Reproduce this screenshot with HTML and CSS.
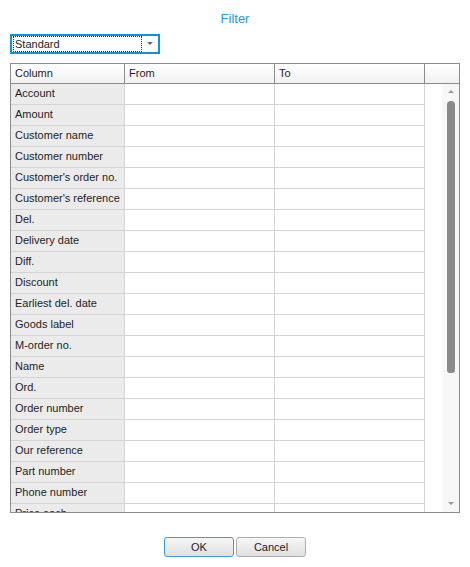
FILE: index.html
```html
<!DOCTYPE html>
<html lang="en">
<head>
    <meta charset="UTF-8">
    <title>Filter</title>
    <link rel="stylesheet" href="styles.css">
</head>
<body>

<div class="dialog">
    <h1 class="title">Filter</h1>

    <div class="select">
        <span class="select-text">Standard</span>
        <span class="select-arrow"></span>
    </div>

    <div class="grid">
        <div class="grid-head">
            <div class="hcell c-col">Column</div>
            <div class="hcell c-from">From</div>
            <div class="hcell c-to">To</div>
            <div class="hcell c-end"></div>
        </div>
        <div class="grid-body">
            <div class="rows">
                <div class="row"><div class="cell c-col name">Account</div><div class="cell c-from"></div><div class="cell c-to"></div></div>
                <div class="row"><div class="cell c-col name">Amount</div><div class="cell c-from"></div><div class="cell c-to"></div></div>
                <div class="row"><div class="cell c-col name">Customer name</div><div class="cell c-from"></div><div class="cell c-to"></div></div>
                <div class="row"><div class="cell c-col name">Customer number</div><div class="cell c-from"></div><div class="cell c-to"></div></div>
                <div class="row"><div class="cell c-col name">Customer's order no.</div><div class="cell c-from"></div><div class="cell c-to"></div></div>
                <div class="row"><div class="cell c-col name">Customer's reference</div><div class="cell c-from"></div><div class="cell c-to"></div></div>
                <div class="row"><div class="cell c-col name">Del.</div><div class="cell c-from"></div><div class="cell c-to"></div></div>
                <div class="row"><div class="cell c-col name">Delivery date</div><div class="cell c-from"></div><div class="cell c-to"></div></div>
                <div class="row"><div class="cell c-col name">Diff.</div><div class="cell c-from"></div><div class="cell c-to"></div></div>
                <div class="row"><div class="cell c-col name">Discount</div><div class="cell c-from"></div><div class="cell c-to"></div></div>
                <div class="row"><div class="cell c-col name">Earliest del. date</div><div class="cell c-from"></div><div class="cell c-to"></div></div>
                <div class="row"><div class="cell c-col name">Goods label</div><div class="cell c-from"></div><div class="cell c-to"></div></div>
                <div class="row"><div class="cell c-col name">M-order no.</div><div class="cell c-from"></div><div class="cell c-to"></div></div>
                <div class="row"><div class="cell c-col name">Name</div><div class="cell c-from"></div><div class="cell c-to"></div></div>
                <div class="row"><div class="cell c-col name">Ord.</div><div class="cell c-from"></div><div class="cell c-to"></div></div>
                <div class="row"><div class="cell c-col name">Order number</div><div class="cell c-from"></div><div class="cell c-to"></div></div>
                <div class="row"><div class="cell c-col name">Order type</div><div class="cell c-from"></div><div class="cell c-to"></div></div>
                <div class="row"><div class="cell c-col name">Our reference</div><div class="cell c-from"></div><div class="cell c-to"></div></div>
                <div class="row"><div class="cell c-col name">Part number</div><div class="cell c-from"></div><div class="cell c-to"></div></div>
                <div class="row"><div class="cell c-col name">Phone number</div><div class="cell c-from"></div><div class="cell c-to"></div></div>
                <div class="row"><div class="cell c-col name">Price each</div><div class="cell c-from"></div><div class="cell c-to"></div></div>
            </div>
            <div class="scroll-area">
                <div class="scrollbar">
                    <span class="arrow-up"></span>
                    <div class="thumb"></div>
                    <span class="arrow-down"></span>
                </div>
            </div>
        </div>
    </div>

    <div class="buttons">
        <button class="btn btn-default">OK</button>
        <button class="btn">Cancel</button>
    </div>
</div>

</body>
</html>
```

FILE: styles.css
```css
body {
    margin: 0;
    background-color: #fff;
    font-family: "Liberation Sans", Arial, sans-serif;
    font-size: 11px;
    color: #1e1e1e;
}
.dialog {
    padding: 10px 10px 0 10px;
}
.title {
    margin: 0;
    height: 18px;
    line-height: 18px;
    text-align: center;
    font-size: 13px;
    font-weight: normal;
    color: #1e96ea;
}
.select {
    margin-top: 6px;
    width: 146px;
    height: 16px;
    border: 2px solid #0b92e2;
    display: flex;
    align-items: center;
    position: relative;
}
.select-text {
    flex: 1;
    height: 14px;
    line-height: 14px;
    padding-left: 1px;
    border: 1px dotted #333;
    margin-left: 1px;
}
.select-arrow {
    width: 16px;
    height: 16px;
    position: relative;
}
.select-arrow::after {
    content: "";
    position: absolute;
    left: 5px;
    top: 6px;
    border-left: 3px solid transparent;
    border-right: 3px solid transparent;
    border-top: 3px solid #666;
}
.grid {
    margin-top: 9px;
    width: 448px;
    border: 1px solid #8c8c8c;
}
.grid-head {
    display: flex;
    height: 19px;
    border-bottom: 1px solid #8c8c8c;
    background: linear-gradient(#ffffff, #f1f1f1);
}
.hcell {
    line-height: 19px;
    padding-left: 4px;
    box-sizing: border-box;
    border-right: 1px solid #8c8c8c;
}
.hcell.c-end {
    border-right: none;
    flex: 1;
}
.c-col {
    width: 114px;
}
.c-from {
    width: 150px;
}
.c-to {
    width: 150px;
}
.grid-body {
    display: flex;
    height: 428px;
    overflow: hidden;
}
.rows {
    width: 414px;
    flex-shrink: 0;
}
.row {
    display: flex;
    height: 20px;
    border-bottom: 1px solid #d4d4d4;
}
.cell {
    box-sizing: border-box;
    border-right: 1px solid #d4d4d4;
    line-height: 18px;
    padding-left: 4px;
    white-space: nowrap;
    overflow: hidden;
}
.cell.name {
    background-color: #ebebeb;
}
.scroll-area {
    flex: 1;
    display: flex;
    justify-content: flex-end;
}
.scrollbar {
    width: 17px;
    background-color: #f7f7f7;
    display: flex;
    flex-direction: column;
    align-items: center;
}
.arrow-up,
.arrow-down {
    width: 0;
    height: 0;
    border-left: 3px solid transparent;
    border-right: 3px solid transparent;
}
.arrow-up {
    margin-top: 6px;
    border-bottom: 3px solid #9a9a9a;
}
.arrow-down {
    margin-top: auto;
    margin-bottom: 7px;
    border-top: 3px solid #9a9a9a;
}
.thumb {
    margin-top: 8px;
    width: 8px;
    height: 272px;
    border-radius: 4px 4px 3px 3px;
    background-color: #8a8a8a;
}
.buttons {
    margin-top: 24px;
    display: flex;
    justify-content: center;
    gap: 2px;
}
.btn {
    width: 70px;
    height: 20px;
    padding: 0;
    font-family: "Liberation Sans", Arial, sans-serif;
    font-size: 11px;
    color: #1e1e1e;
    background: linear-gradient(#f6f6f6, #e0e0e0);
    border: 1px solid #adadad;
    border-radius: 3px;
}
.btn-default {
    border-color: #3c9ae2;
}
```
